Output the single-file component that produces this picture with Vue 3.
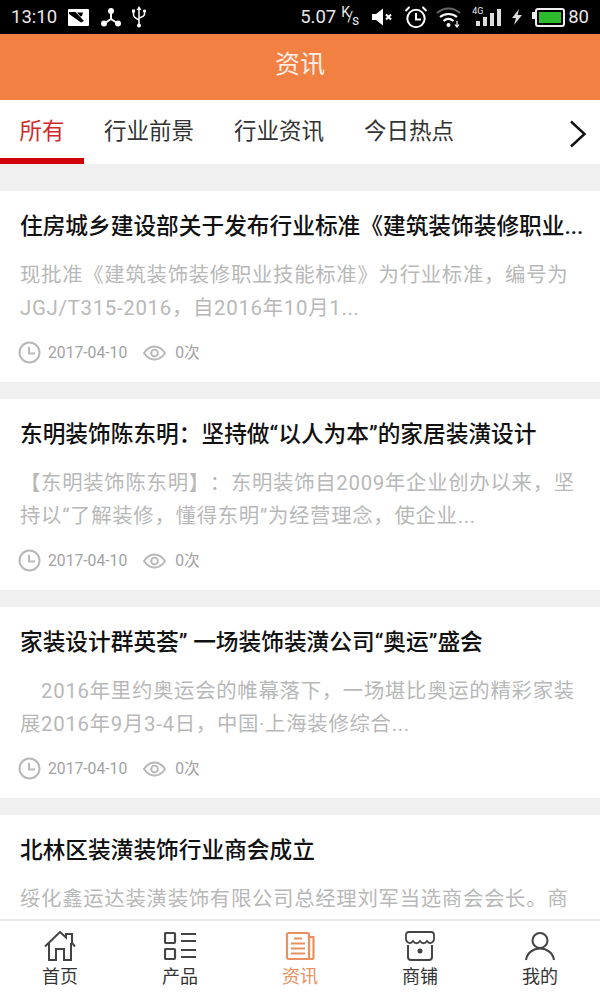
<template>
  <div class="page">
    <div class="status-bar">
      <div class="status-left">
        <span class="clock">13:10</span>
        <svg class="pic" width="21" height="17" viewBox="0 0 21 17">
          <rect width="21" height="17" rx="1" fill="#fff" />
          <path d="M1 3h6.500L16 12l-3 1.500L1 5z" fill="#000" />
          <path d="M9 3.500h6l-1 3.500-1.500 0.500z" fill="#000" />
        </svg>
        <svg class="hub" width="20" height="20" viewBox="0 0 20 20">
          <path d="M10 6v6M10 12l-6 4M10 12l6 4" stroke="#fff" stroke-width="2" fill="none" />
          <circle cx="10" cy="4" r="3" fill="#fff" />
          <circle cx="3" cy="16.500" r="3" fill="#fff" />
          <circle cx="17" cy="16.500" r="3" fill="#fff" />
        </svg>
        <svg class="usb" width="14" height="22" viewBox="0 0 14 22">
          <path d="M7 3v16M1.500 6v3c0 2 1.500 3 5.500 5M12.500 6v2c0 2-1.500 3-5.500 4" stroke="#fff" stroke-width="1.500" fill="none" />
          <path d="M7 0l2.500 4h-5z" fill="#fff" />
          <circle cx="7" cy="19.500" r="2" fill="#fff" />
          <rect x="0" y="3.500" width="3" height="3" fill="#fff" />
          <circle cx="12.500" cy="5" r="1.600" fill="#fff" />
        </svg>
      </div>
      <div class="status-right">
        <span class="speed">5.07</span>
        <span class="unit"><i class="k">K</i>/<i class="s">s</i></span>
        <svg class="mute" width="20" height="18" viewBox="0 0 20 18">
          <path d="M0 6h4l7-5.500v17L4 12H0z" fill="#fff" />
          <path d="M14 6.500l5 5M19 6.500l-5 5" stroke="#fff" stroke-width="2" />
        </svg>
        <svg class="alarm" width="22" height="24" viewBox="0 0 22 24">
          <circle cx="11" cy="13.500" r="8.700" stroke="#fff" stroke-width="2" fill="none" />
          <path d="M11 8v6.500h5" stroke="#fff" stroke-width="2" fill="none" />
          <path d="M0.500 6l4-4M21.500 6l-4-4" stroke="#fff" stroke-width="2" />
        </svg>
        <svg class="wifi" width="25" height="22" viewBox="0 0 25 22">
          <path d="M1 7c7-6 16-6 23 0" stroke="#666" stroke-width="2.200" fill="none" />
          <path d="M4 11c5-4 12-4 17 0" stroke="#fff" stroke-width="2.200" fill="none" />
          <path d="M7.500 15c3-2.500 7-2.500 10 0" stroke="#fff" stroke-width="2.200" fill="none" />
          <circle cx="12.500" cy="19" r="2" fill="#fff" />
          <path d="M21 15v5M19 18.500l2 2.500 2-2.500" stroke="#fff" stroke-width="1.200" fill="none" />
        </svg>
        <div class="signal">
          <span class="net">4G</span>
          <div class="bars">
            <i v-for="h in signalBars" :key="h" :style="{ height: h + 'px' }"></i>
          </div>
        </div>
        <svg class="bolt" width="10" height="16" viewBox="0 0 10 16">
          <path d="M7 0L0 9h4l-2 7 8-10H5.500z" fill="#ddd" />
        </svg>
        <div class="battery">
          <div class="battery-fill"></div>
        </div>
        <span class="level">80</span>
      </div>
    </div>

    <div class="header">资讯</div>

    <div class="tabs">
      <div
        v-for="(tab, i) in tabs"
        :key="tab"
        class="tab"
        :class="{ active: i === 0 }"
      >{{ tab }}</div>
      <svg class="tab-more" width="18" height="28" viewBox="0 0 18 28">
        <path d="M2 1.500L15.500 14 2 26.500" stroke="#111" stroke-width="2.400" fill="none" />
      </svg>
    </div>

    <div class="list">
      <div v-for="item in news" :key="item.title" class="card">
        <div class="card-title">{{ item.title }}</div>
        <div class="card-desc">{{ item.desc }}</div>
        <div class="card-meta">
          <svg width="23" height="23" viewBox="0 0 23 23">
            <circle cx="11.500" cy="11.500" r="10" stroke="#b8b8b8" stroke-width="2" fill="none" />
            <path d="M11 6v6.500h6" stroke="#b8b8b8" stroke-width="2" fill="none" />
          </svg>
          <span class="date">2017-04-10</span>
          <svg class="eye" width="24" height="16" viewBox="0 0 24 16">
            <path d="M1 8c6-9 16-9 22 0-6 9-16 9-22 0z" stroke="#b8b8b8" stroke-width="2" fill="none" />
            <circle cx="12" cy="8" r="3.500" stroke="#b8b8b8" stroke-width="2" fill="none" />
          </svg>
          <span class="views">0次</span>
        </div>
      </div>
    </div>

    <div class="tabbar">
      <div class="nav-item">
        <svg width="32" height="30" viewBox="0 0 32 30">
          <path d="M1 15.500L16 1l6 5.500V3h6v9l3 3.500" stroke="#444" stroke-width="2" fill="none" />
          <path d="M5 12v17h7V18h8v11h7V12" stroke="#444" stroke-width="2" fill="none" />
        </svg>
        <span>首页</span>
      </div>
      <div class="nav-item">
        <svg width="32" height="30" viewBox="0 0 32 30">
          <rect x="1" y="2" width="10" height="10" rx="1" stroke="#444" stroke-width="2.200" fill="none" />
          <rect x="1" y="18" width="10" height="10" rx="1" stroke="#444" stroke-width="2.200" fill="none" />
          <path d="M17 3h15M17 10h15M17 19h15M17 26h15" stroke="#444" stroke-width="2" />
        </svg>
        <span>产品</span>
      </div>
      <div class="nav-item current">
        <svg width="30" height="30" viewBox="0 0 30 30">
          <rect x="2" y="2" width="22" height="26" rx="1.500" stroke="#e8905f" stroke-width="2.200" fill="none" />
          <path d="M24 6h4.500v21a1 1 0 0 1-1 1H24" stroke="#e8905f" stroke-width="2.200" fill="none" />
          <path d="M9 7.500h8M6 12.500h14M6 17.500h14M6 22.500h14" stroke="#e8905f" stroke-width="2" />
        </svg>
        <span>资讯</span>
      </div>
      <div class="nav-item">
        <svg width="30" height="30" viewBox="0 0 30 30">
          <path d="M4 1h22a3 3 0 0 1 3 3v5c-2 4-5 4-7 1-2 3-5 3-7 0-2 3-5 3-7 0-2 3-5 3-7-1V4a3 3 0 0 1 3-3z" stroke="#444" stroke-width="1.800" fill="none" />
          <path d="M3 14v12a3 3 0 0 0 3 3h18a3 3 0 0 0 3-3V14" stroke="#444" stroke-width="2" fill="none" />
          <circle cx="15" cy="20" r="2.500" fill="#444" />
        </svg>
        <span>商铺</span>
      </div>
      <div class="nav-item">
        <svg width="30" height="30" viewBox="0 0 30 30">
          <circle cx="15" cy="9.500" r="7.500" stroke="#444" stroke-width="2" fill="none" />
          <path d="M1 29c1-7 7-11.500 14-11.500S28 22 29 29" stroke="#444" stroke-width="2" fill="none" />
        </svg>
        <span>我的</span>
      </div>
    </div>
  </div>
</template>

<script setup>
const tabs = ['所有', '行业前景', '行业资讯', '今日热点']
const signalBars = [5, 9, 13, 17]

const news = [
  {
    title: '住房城乡建设部关于发布行业标准《建筑装饰装修职业...',
    desc: '现批准《建筑装饰装修职业技能标准》为行业标准，编号为JGJ/T315-2016，自2016年10月1...'
  },
  {
    title: '东明装饰陈东明：坚持做“以人为本”的家居装潢设计',
    desc: '【东明装饰陈东明】：东明装饰自2009年企业创办以来，坚持以“了解装修，懂得东明”为经营理念，使企业...'
  },
  {
    title: '家装设计群英荟” 一场装饰装潢公司“奥运”盛会',
    desc: '\u30002016年里约奥运会的帷幕落下，一场堪比奥运的精彩家装展2016年9月3-4日，中国·上海装修综合...'
  },
  {
    title: '北林区装潢装饰行业商会成立',
    desc: '绥化鑫运达装潢装饰有限公司总经理刘军当选商会会长。商会的成立将进一步推动行业发展...'
  }
]
</script>

<style>
html,
body {
  margin: 0;
  background: #fff;
}
</style>

<style scoped>
.page {
  display: flex;
  flex-direction: column;
  width: 600px;
  height: 1000px;
  overflow: hidden;
  font-family: Roboto, "Noto Sans CJK SC", sans-serif;
  text-spacing-trim: space-all;
  background: #f0f0f0;
}

/* 状态栏 */
.status-bar {
  display: flex;
  flex: none;
  align-items: center;
  justify-content: space-between;
  height: 34px;
  padding: 0 11px;
  box-sizing: border-box;
  background: #000;
  color: #e8e8e8;
  font-size: 18.500px;
}

.status-left,
.status-right {
  display: flex;
  align-items: center;
}

.pic {
  margin-left: 11px;
}

.hub {
  margin-left: 12px;
}

.usb {
  margin-left: 11px;
}

.unit {
  position: relative;
  width: 18px;
  height: 24px;
  margin-left: 5px;
  font-size: 14px;
  line-height: 24px;
  text-align: center;
}

.unit i {
  position: absolute;
  font-style: normal;
}

.unit .k {
  top: -5px;
  left: 0;
}

.unit .s {
  top: 3px;
  right: 0;
}

.mute {
  margin-left: 13px;
}

.alarm {
  margin-left: 13px;
}

.wifi {
  margin-left: 9px;
}

.signal {
  position: relative;
  width: 30px;
  height: 18px;
  margin-left: 10px;
}

.net {
  position: absolute;
  top: 0;
  left: 1px;
  font-size: 9px;
  line-height: 7px;
}

.bars {
  position: absolute;
  right: 0;
  bottom: 0;
  display: flex;
  align-items: flex-end;
  gap: 3px;
}

.bars i {
  display: block;
  width: 4px;
  background: #ddd;
}

.bolt {
  margin-left: 11px;
}

.battery {
  position: relative;
  width: 22px;
  height: 11px;
  margin-left: 13px;
  padding: 2px;
  border: 2px solid #eee;
  border-radius: 3px;
}

.battery::before {
  content: "";
  position: absolute;
  top: 2px;
  left: -5px;
  width: 3px;
  height: 7px;
  background: #eee;
}

.battery-fill {
  width: 100%;
  height: 100%;
  background: #2dbb2d;
}

.level {
  margin-left: 3px;
}

/* 标题栏 */
.header {
  flex: none;
  height: 66px;
  background: #f38043;
  color: #fdeee6;
  font-size: 25px;
  line-height: 61px;
  text-align: center;
}

/* 分类标签 */
.tabs {
  display: flex;
  flex: none;
  align-items: stretch;
  position: relative;
  height: 64px;
  background: #fff;
}

.tab {
  padding: 0 20px;
  color: #333;
  font-size: 22.500px;
  line-height: 62px;
}

.tab.active {
  padding: 0 19.500px;
  color: #cf2a2a;
  box-shadow: inset 0 -6px 0 #d20000;
}

.tab-more {
  position: absolute;
  top: 20px;
  right: 13px;
}

/* 资讯列表 */
.list {
  flex: 1;
  min-height: 0;
  overflow: hidden;
  padding-top: 27px;
}

.card {
  height: 191px;
  margin-bottom: 17px;
  padding: 19px 20px 0;
  box-sizing: border-box;
  background: #fff;
}

.card-title {
  height: 34px;
  color: #111;
  font-size: 22.700px;
  font-weight: 500;
  line-height: 34px;
  white-space: nowrap;
}

.card-desc {
  height: 66px;
  margin-top: 15px;
  color: #b8b8b8;
  font-size: 20.400px;
  letter-spacing: 0.700px;
  line-height: 33px;
}

.card-meta {
  display: flex;
  align-items: center;
  margin-top: 16px;
  margin-left: -2px;
  color: #a2a2a2;
  font-size: 15.700px;
  line-height: 20px;
}

.date {
  margin-left: 7px;
}

.eye {
  width: 23px;
  margin-left: 16px;
}

.views {
  margin-left: 9px;
}

/* 底部导航 */
.tabbar {
  display: flex;
  flex: none;
  height: 81px;
  box-sizing: border-box;
  border-top: 2px solid #ececec;
  background: #fff;
}

.nav-item {
  display: flex;
  flex: 1;
  flex-direction: column;
  align-items: center;
  padding-top: 10px;
  color: #333;
  font-size: 18px;
  line-height: 26px;
}

.nav-item span {
  margin-top: 3px;
}

.nav-item.current {
  color: #e8905f;
}
</style>
